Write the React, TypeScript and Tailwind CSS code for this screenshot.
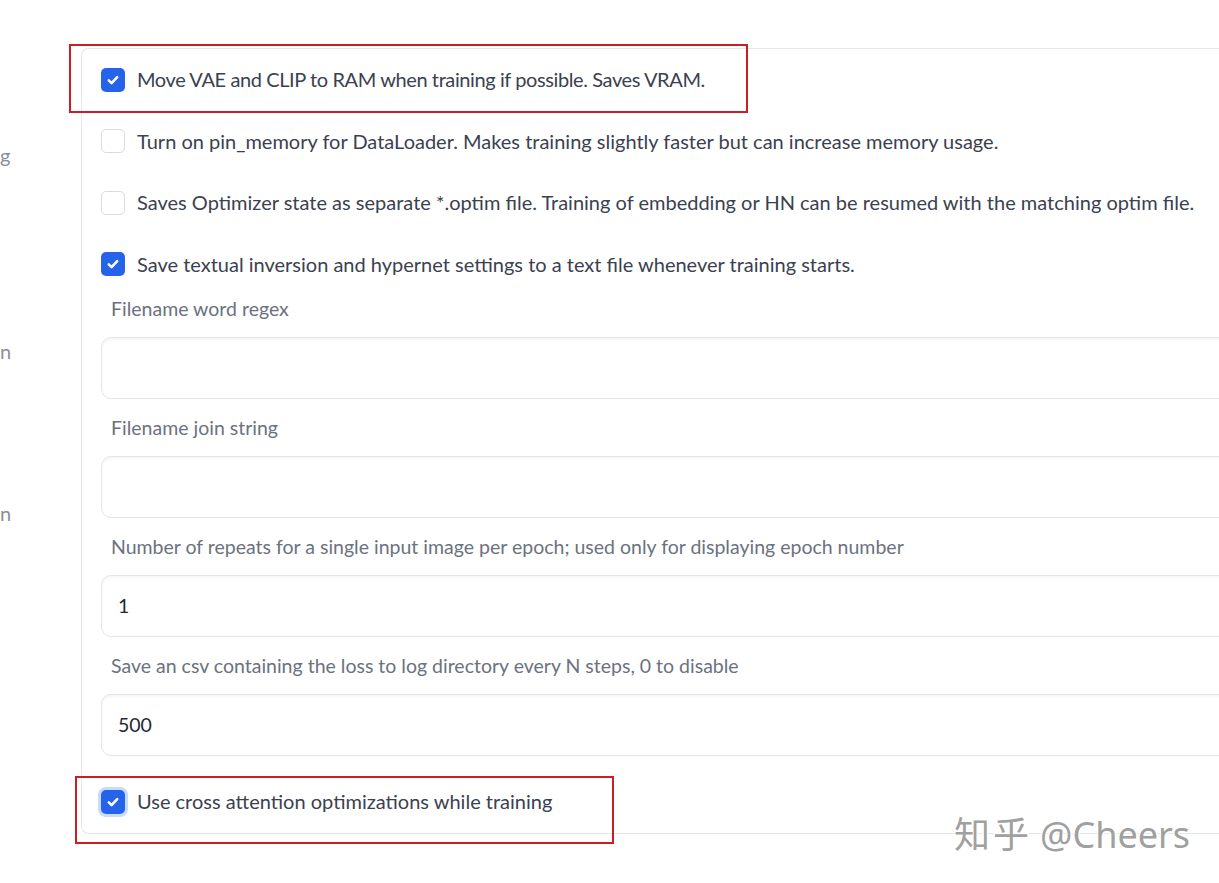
import React from "react";

const font = { fontFamily: "Lato, 'Noto Sans', sans-serif" };

function Check({ checked, focus }: { checked?: boolean; focus?: boolean }) {
  return (
    <div
      className={
        "w-6 h-6 rounded-[5px] flex items-center justify-center shrink-0 " +
        (checked ? "bg-[#2563eb] " : "bg-white border border-[#d9dce1] ") +
        (focus ? "ring-[3px] ring-[#c7dbfd]" : "")
      }
    >
      {checked && (
        <svg width="16" height="16" viewBox="0 0 16 16" fill="none">
          <path d="M3.8 8.4l2.8 2.8 5.6-6" stroke="white" strokeWidth="2.6" strokeLinecap="round" strokeLinejoin="round" />
        </svg>
      )}
    </div>
  );
}

function CheckRow({ text, checked, focus, tight }: { text: string; checked?: boolean; focus?: boolean; tight?: boolean }) {
  return (
    <div className="h-[61.5px] flex items-center gap-3 pl-[19px]">
      <Check checked={checked} focus={focus} />
      <span className={"text-[20px] text-[#3b4150] whitespace-nowrap leading-none pb-[1px] " + (tight ? "tracking-[-0.4px]" : "")}>{text}</span>
    </div>
  );
}

function Field({ label, value }: { label: string; value?: string }) {
  return (
    <div className="pl-[19px] pb-[15px]">
      <div className="h-7 flex items-center pl-[10px] text-[19.5px] text-[#6b7280] whitespace-nowrap">{label}</div>
      <div className="mt-[14px] h-[62px] rounded-l-[10px] border border-[#e3e5e8] bg-white shadow-[inset_0_2px_3px_rgba(0,0,0,0.04)] flex items-center pl-4 text-[19.5px] text-[#1f2937]">
        {value}
      </div>
    </div>
  );
}

function Clipped({ text, top }: { text: string; top: string }) {
  return (
    <div className={"h-7 flex items-center text-[20px] text-[#8b8f96] whitespace-nowrap " + top}>
      <span>{text}</span>
    </div>
  );
}

export default function App() {
  return (
    <div className="w-[1219px] h-[883px] bg-white relative overflow-hidden flex" style={font}>
      <div className="w-[81px] shrink-0 flex flex-col">
        <Clipped text="g" top="mt-[141px]" />
        <Clipped text="n" top="mt-[168px]" />
        <Clipped text="n" top="mt-[134px]" />
      </div>
      <div className="mt-[48px] w-[1250px] shrink-0 self-start border-l border-t border-b border-[#e5e7eb] rounded-l-[8px]">
        <CheckRow checked tight text="Move VAE and CLIP to RAM when training if possible. Saves VRAM." />
        <CheckRow text="Turn on pin_memory for DataLoader. Makes training slightly faster but can increase memory usage." />
        <CheckRow text="Saves Optimizer state as separate *.optim file. Training of embedding or HN can be resumed with the matching optim file." />
        <CheckRow checked text="Save textual inversion and hypernet settings to a text file whenever training starts." />
        <Field label="Filename word regex" />
        <Field label="Filename join string" />
        <Field label="Number of repeats for a single input image per epoch; used only for displaying epoch number" value="1" />
        <Field label="Save an csv containing the loss to log directory every N steps, 0 to disable" value="500" />
        <CheckRow checked focus text="Use cross attention optimizations while training" />
      </div>

      <div className="absolute left-[69px] top-[44px] w-[679px] h-[69px] border-2 border-[#c81e25]" />
      <div className="absolute left-[75px] top-[776px] w-[539px] h-[68px] border-2 border-[#c81e25]" />

      <div
        className="absolute left-[954px] top-[808px] text-[36px] text-[#a0a0a0] whitespace-nowrap"
        style={{
          fontFamily: "'Noto Sans', 'Noto Sans CJK SC', sans-serif",
          textShadow: "1px 1px 0 #fff, -1px -1px 0 #fff, 1px -1px 0 #fff, -1px 1px 0 #fff",
        }}
      >
        <span className="tracking-[3px]">知乎</span>
        <span className="ml-[8px]">@Cheers</span>
      </div>
    </div>
  );
}
